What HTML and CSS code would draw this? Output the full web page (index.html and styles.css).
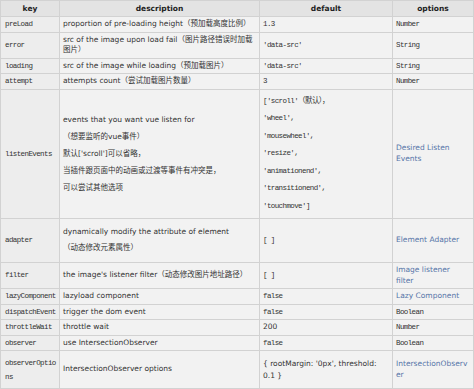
FILE: index.html
```html
<!DOCTYPE html>
<html lang="zh">
<head>
<meta charset="utf-8">
<title>vue-lazyload options</title>
<link rel="stylesheet" href="styles.css">
</head>
<body>
<table class="opts">
  <colgroup>
    <col class="c-key"><col class="c-desc"><col class="c-def"><col class="c-opt">
  </colgroup>
  <thead>
    <tr><th>key</th><th>description</th><th>default</th><th>options</th></tr>
  </thead>
  <tbody>
    <tr>
      <td class="key">preLoad</td>
      <td>proportion of pre-loading height（预加载高度比例）</td>
      <td class="mono">1.3</td>
      <td class="mono">Number</td>
    </tr>
    <tr>
      <td class="key">error</td>
      <td>src of the image upon load fail（图片路径错误时加载图片）</td>
      <td class="mono">'data-src'</td>
      <td class="mono">String</td>
    </tr>
    <tr>
      <td class="key">loading</td>
      <td>src of the image while loading（预加载图片）</td>
      <td class="mono">'data-src'</td>
      <td class="mono">String</td>
    </tr>
    <tr>
      <td class="key">attempt</td>
      <td>attempts count（尝试加载图片数量）</td>
      <td class="mono">3</td>
      <td class="mono">Number</td>
    </tr>
    <tr>
      <td class="key">listenEvents</td>
      <td class="tall">events that you want vue listen for<br>（想要监听的vue事件）<br>默认['scroll']可以省略，<br>当插件跟页面中的动画或过渡等事件有冲突是，<br>可以尝试其他选项</td>
      <td class="mono tall-def">['scroll'（默认），<br>'wheel',<br>'mousewheel',<br>'resize',<br>'animationend',<br>'transitionend',<br>'touchmove']</td>
      <td class="link">Desired Listen Events</td>
    </tr>
    <tr>
      <td class="key">adapter</td>
      <td class="mid">dynamically modify the attribute of element<br>（动态修改元素属性）</td>
      <td class="mono">[ ]</td>
      <td class="link">Element Adapter</td>
    </tr>
    <tr>
      <td class="key">filter</td>
      <td>the image's listener filter（动态修改图片地址路径）</td>
      <td class="mono">[ ]</td>
      <td class="link">Image listener filter</td>
    </tr>
    <tr>
      <td class="key">lazyComponent</td>
      <td>lazyload component</td>
      <td class="mono">false</td>
      <td class="link">Lazy Component</td>
    </tr>
    <tr>
      <td class="key">dispatchEvent</td>
      <td>trigger the dom event</td>
      <td class="mono">false</td>
      <td class="mono">Boolean</td>
    </tr>
    <tr>
      <td class="key">throttleWait</td>
      <td>throttle wait</td>
      <td>200</td>
      <td class="mono">Number</td>
    </tr>
    <tr>
      <td class="key">observer</td>
      <td>use IntersectionObserver</td>
      <td class="mono">false</td>
      <td class="mono">Boolean</td>
    </tr>
    <tr>
      <td class="key key-wrap">observerOptions</td>
      <td>IntersectionObserver options</td>
      <td class="obs">{ rootMargin: '0px', threshold: 0.1 }</td>
      <td class="link">IntersectionObserver</td>
    </tr>
  </tbody>
</table>
</body>
</html>
```

FILE: styles.css
```css
html, body {
  margin: 0;
  padding: 0;
  background: #efefef;
}

body {
  width: 474px;
  height: 389px;
  overflow: hidden;
  color: #333;
  font-family: "DejaVu Sans", Verdana, "Noto Sans CJK SC", sans-serif;
  font-size: 7.5px;
}

.opts {
  border-collapse: collapse;
  table-layout: fixed;
  width: 473px;
  background: #f2f2f2;
}

.c-key { width: 59px; }
.c-desc { width: 200px; }
.c-def { width: 133px; }
.c-opt { width: 81px; }

.opts th,
.opts td {
  border: 1px solid #d2d2d2;
  padding: 2px 3px;
  line-height: 10.5px;
  vertical-align: middle;
  text-align: left;
  overflow-wrap: anywhere;
}

.opts th {
  background: #e3e3e3;
  font-weight: bold;
  text-align: center;
  color: #222;
  line-height: 11px;
}

.opts td.key {
  font-family: "Liberation Mono", "Noto Sans CJK SC", monospace;
  font-size: 7.5px;
  letter-spacing: -0.6px;
  padding-left: 4px;
  padding-right: 2px;
  background: #ededed;
}

.opts td.key-wrap {
  line-height: 14px;
}

.opts td.mono {
  font-family: "Liberation Mono", "Noto Sans CJK SC", monospace;
  font-size: 7.5px;
  letter-spacing: -0.6px;
}

.opts td.link {
  color: #5675a8;
  padding-right: 5px;
}

.opts td.tall {
  line-height: 17px;
}

.opts td.tall-def {
  line-height: 17.5px;
  padding-top: 3px;
  padding-bottom: 3px;
}

.opts td.mid {
  line-height: 16px;
  padding-top: 5px;
  padding-bottom: 6px;
}

.opts td.obs {
  line-height: 12px;
  padding-top: 7px;
  padding-bottom: 6px;
}
```
